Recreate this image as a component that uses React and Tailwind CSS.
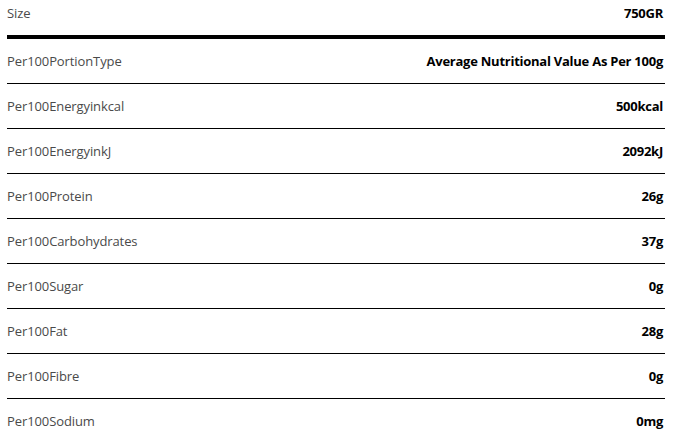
const rows = [
  ['Per100PortionType', 'Average Nutritional Value As Per 100g'],
  ['Per100Energyinkcal', '500kcal'],
  ['Per100EnergyinkJ', '2092kJ'],
  ['Per100Protein', '26g'],
  ['Per100Carbohydrates', '37g'],
  ['Per100Sugar', '0g'],
  ['Per100Fat', '28g'],
  ['Per100Fibre', '0g'],
  ['Per100Sodium', '0mg'],
]

export default function App() {
  return (
    <div className="bg-white w-[679px] h-[435px] overflow-hidden font-['Open_Sans',sans-serif] text-[13px] leading-5">
      <div className="ml-[7px] w-[658px]">
        <div className="flex justify-between items-center pt-[3px] pb-3 border-b-4 border-black">
          <span className="text-[#4a4a4a] tracking-[-0.1px]">Size</span>
          <span className="font-bold text-black pr-[2px] tracking-[-0.25px]">750GR</span>
        </div>
        {rows.map(([label, value]) => (
          <div key={label} className="flex justify-between items-center py-3 border-b border-black">
            <span className="text-[#4a4a4a] tracking-[-0.1px]">{label}</span>
            <span className="font-bold text-black pr-[2px] tracking-[-0.25px]">{value}</span>
          </div>
        ))}
      </div>
    </div>
  )
}
